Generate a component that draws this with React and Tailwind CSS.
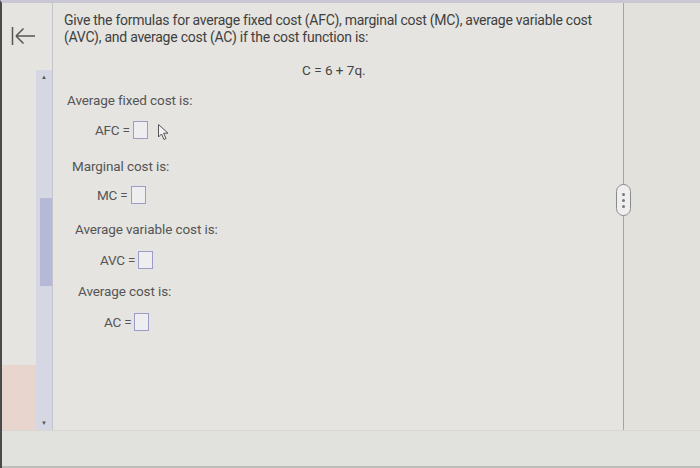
import React from "react";

function Box() {
  return <span className="inline-block w-[15px] h-[18px] border border-[#9d9cc9] bg-[#eeeef0] ml-[3px]" />;
}

function Row({ pl, label, cursor }) {
  return (
    <div className="h-[22px] flex items-center text-[13.5px] tracking-[-0.2px] text-[#555]" style={{ paddingLeft: pl }}>
      <span>{label} =</span>
      <Box />
      {cursor && (
        <svg width="14" height="18" viewBox="0 0 14 18" className="ml-[9px] mt-[4px]">
          <path d="M1.5 1.5 L1.5 14 L4.5 11 L7 16.5 L9 15.5 L6.6 10.2 L11 10.2 Z" fill="#f2f2f2" stroke="#555" strokeWidth="1" strokeLinejoin="round" />
        </svg>
      )}
    </div>
  );
}

function Label({ pl, mt, children }) {
  return (
    <div className="h-[20px] flex items-center text-[13.5px] tracking-[-0.1px] text-[#555]" style={{ paddingLeft: pl, marginTop: mt }}>
      {children}
    </div>
  );
}

export default function App() {
  return (
    <div className="w-[700px] h-[468px] bg-[#e5e4e0] border-t-[3px] border-t-[#c9c7d3] border-l-2 border-l-[#4a4a4a] flex flex-col font-['Roboto',sans-serif] relative overflow-hidden">
      <div className="flex flex-1">
        <div className="w-[50px] flex flex-col">
          <div className="h-[67px] pt-[22px] pl-[9px]">
            <svg width="26" height="22" viewBox="0 0 26 22">
              <path d="M1.5 2 V20" stroke="#555" strokeWidth="1.5" />
              <path d="M5 11 H24 M5 11 L12.5 3.5 M5 11 L12.5 18.5" stroke="#555" strokeWidth="1.5" fill="none" />
            </svg>
          </div>
          <div className="flex flex-1">
            <div className="flex-1 flex flex-col justify-end">
              <div className="h-[65px] bg-[#e8d5cd]" />
            </div>
            <div className="w-[16px] bg-[#d5d8e2] flex flex-col items-center">
              <span className="text-[6px] leading-[10px] text-[#555] mt-[2px]">▲</span>
              <div className="h-[116px]" />
              <div className="h-[88px] w-[12px] ml-[3px] bg-[#b5b8d7]" />
              <div className="flex-1" />
              <span className="text-[6px] leading-[10px] text-[#555] mb-[2px]">▼</span>
            </div>
          </div>
        </div>
        <div className="w-[572px] border-l border-l-[#c4c4cc] border-r border-r-[#a3a3ab] pl-[11px] pt-[9px] text-[#444] relative">
          <p className="text-[14px] leading-[17px] tracking-[-0.25px] text-[#3f3f3f]">
            Give the formulas for average fixed cost (AFC), marginal cost (MC), average variable cost
            <br />
            (AVC), and average cost (AC) if the cost function is:
          </p>
          <div className="h-[20px] mt-[14px] pl-[238px] flex items-center text-[13.5px] text-[#444]">
            C = 6 + 7q.
          </div>
          <Label pl={3} mt={10}>Average fixed cost is:</Label>
          <div className="mt-[9px]"><Row pl={31} label="AFC" cursor /></div>
          <Label pl={8} mt={15}>Marginal cost is:</Label>
          <div className="mt-[8px]"><Row pl={33} label="MC" /></div>
          <Label pl={11} mt={13}>Average variable cost is:</Label>
          <div className="mt-[10px]"><Row pl={36} label="AVC" /></div>
          <Label pl={14} mt={10}>Average cost is:</Label>
          <div className="mt-[10px]"><Row pl={40} label="AC" /></div>
          <div className="absolute right-[-8px] top-[181px] w-[15px] h-[32px] rounded-full border border-[#8a8a92] bg-[#efefef] flex flex-col items-center justify-center gap-[3px]">
            <span className="w-[3px] h-[3px] rounded-full bg-[#777]" />
            <span className="w-[3px] h-[3px] rounded-full bg-[#777]" />
            <span className="w-[3px] h-[3px] rounded-full bg-[#777]" />
          </div>
        </div>
        <div className="flex-1 bg-[#e3e1dc]" />
      </div>
      <div className="h-[38px] bg-[#e1e1dd] border-t border-t-[#d6d6d2] border-b-2 border-b-[#bdbdb9]" />
    </div>
  );
}
